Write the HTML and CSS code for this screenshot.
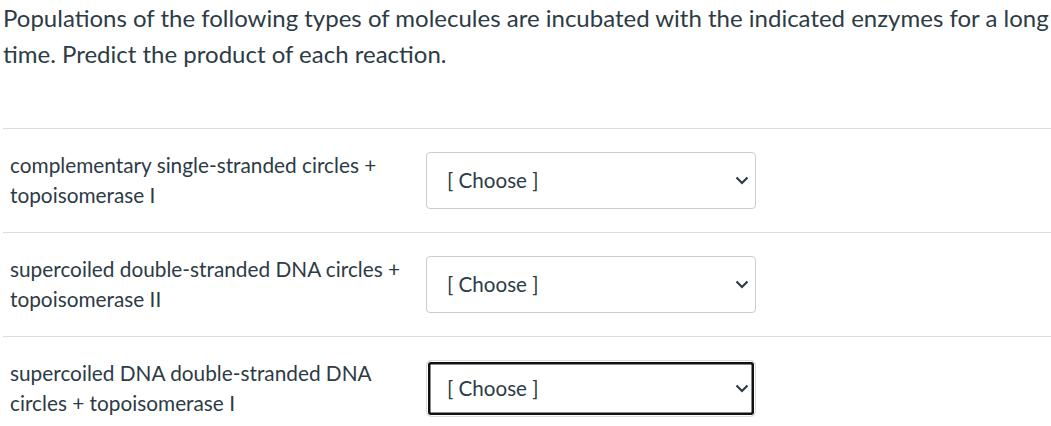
FILE: index.html
```html
<!DOCTYPE html>
<html>
<head>
<meta charset="utf-8">
<link rel="stylesheet" href="styles.css">
</head>
<body>
<div class="page">
  <p class="intro">Populations of the following types of molecules are incubated with the indicated enzymes for a long time. Predict the product of each reaction.</p>
  <div class="rows">
    <div class="row">
      <div class="label">complementary single-stranded circles + topoisomerase I</div>
      <div class="select">
        <span class="choose">[ Choose ]</span>
        <svg class="chev" width="14" height="9" viewBox="0 0 14 9"><path d="M1.5 1.5 L7 7 L12.5 1.5" fill="none" stroke="#2d3b45" stroke-width="2.2"/></svg>
      </div>
    </div>
    <div class="row">
      <div class="label">supercoiled double-stranded DNA circles + topoisomerase II</div>
      <div class="select">
        <span class="choose">[ Choose ]</span>
        <svg class="chev" width="14" height="9" viewBox="0 0 14 9"><path d="M1.5 1.5 L7 7 L12.5 1.5" fill="none" stroke="#2d3b45" stroke-width="2.2"/></svg>
      </div>
    </div>
    <div class="row">
      <div class="label">supercoiled DNA double-stranded DNA circles + topoisomerase I</div>
      <div class="select focused">
        <span class="choose">[ Choose ]</span>
        <svg class="chev" width="14" height="9" viewBox="0 0 14 9"><path d="M1.5 1.5 L7 7 L12.5 1.5" fill="none" stroke="#2d3b45" stroke-width="2.2"/></svg>
      </div>
    </div>
  </div>
</div>
</body>
</html>
```
FILE: styles.css
```css
html, body {
  margin: 0;
  padding: 0;
  background: #fff;
}
body {
  font-family: Lato, "Open Sans", sans-serif;
  color: #2d3b45;
}
.page {
  padding-left: 3px;
}
.intro {
  margin: 0;
  padding-top: 0;
  font-size: 24px;
  line-height: 36px;
  height: 128px;
}
.row {
  border-top: 1px solid #dcdcdc;
  padding: 21px 0 22px;
  display: flex;
  align-items: center;
}
.label {
  width: 400px;
  padding-left: 7px;
  padding-right: 16px;
  font-size: 20.8px;
  line-height: 30px;
  height: 60px;
}
.select {
  box-sizing: border-box;
  width: 330px;
  height: 57px;
  border: 1px solid #c7cdd1;
  border-radius: 4px;
  display: flex;
  align-items: center;
  justify-content: space-between;
  padding: 0 6px 0 20px;
}
.select.focused {
  box-shadow: inset 0 0 0 1px #fff, inset 0 0 0 3.5px #111;
  border-color: #dcdcdc;
  border-radius: 5px;
}
.choose {
  font-size: 20.6px;
}
.chev {
  display: block;
}
```
